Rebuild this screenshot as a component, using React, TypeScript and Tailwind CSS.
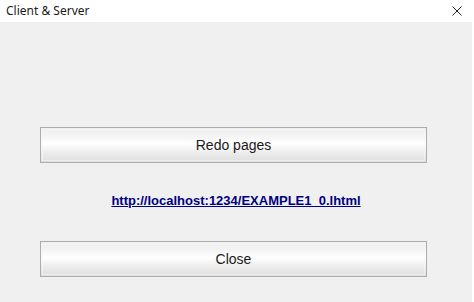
import React from "react";

function Btn({ label }: { label: string }) {
  return (
    <div className="ml-[40px] mr-[45px] h-[36px] border border-[#adadad] bg-[linear-gradient(to_bottom,#efefef_0%,#f4f4f4_25%,#ffffff_45%,#ebebeb_75%,#dedede_100%)] p-px">
      <div className="flex h-full items-center justify-center border border-[#f7f7f7]/60 text-[14px] text-[#1a1a1a] [font-family:'Liberation_Sans',Arial,sans-serif]">
        {label}
      </div>
    </div>
  );
}

export default function App() {
  return (
    <div className="flex h-[302px] w-[474px] flex-col bg-white">
      <div className="flex h-[22px] items-center justify-between pl-[6px] pr-[8px]">
        <span className="text-[12px] text-[#1a1a1a] [font-family:'Noto_Sans',sans-serif]">Client &amp; Server</span>
        <svg width="10" height="10" viewBox="0 0 10 10" className="mr-[4px]">
          <path d="M0.5 0.5 L9.5 9.5 M9.5 0.5 L0.5 9.5" stroke="#222" strokeWidth="1" />
        </svg>
      </div>
      <div className="mr-[2px] flex flex-1 flex-col bg-[#f0f0f0] pt-[105px]">
        <Btn label="Redo pages" />
        <div className="mt-[25px] flex h-[25px] items-center justify-center">
          <a className="text-[13px] font-bold text-[#000080] underline [font-family:'Liberation_Sans',Arial,sans-serif]">
            http://localhost:1234/EXAMPLE1_0.lhtml
          </a>
        </div>
        <div className="mt-[28px]">
          <Btn label="Close" />
        </div>
      </div>
    </div>
  );
}
